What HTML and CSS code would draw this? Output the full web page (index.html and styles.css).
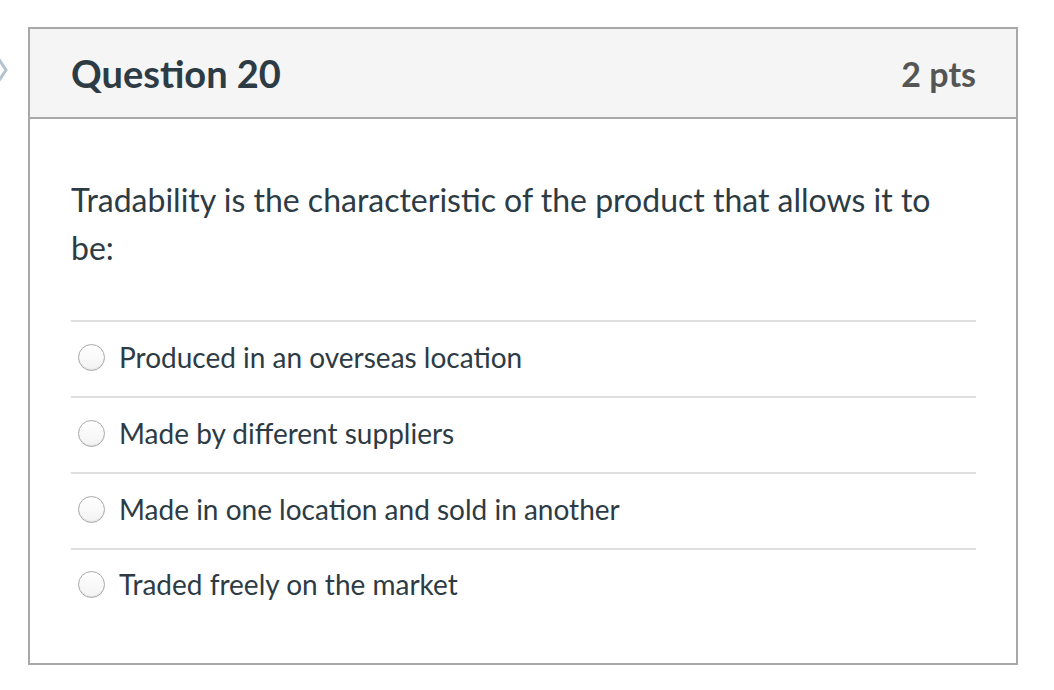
FILE: index.html
```html
<!DOCTYPE html>
<html>
<head>
<meta charset="utf-8">
<link rel="stylesheet" href="styles.css">
</head>
<body>
<div class="page">
  <svg class="nav-arrow" width="12" height="30" viewBox="0 0 12 30"><polyline points="1,3 9,15 1,27" fill="none" stroke="#b4c3cf" stroke-width="3"/></svg>
  <div class="card">
    <div class="card-header">
      <h2 class="title">Question 20</h2>
      <span class="pts">2 pts</span>
    </div>
    <div class="card-body">
      <p class="question">Tradability is the characteristic of the product that allows it to be:</p>
      <div class="answers">
        <label class="answer"><span class="radio"></span><span class="answer-text">Produced in an overseas location</span></label>
        <label class="answer"><span class="radio"></span><span class="answer-text">Made by different suppliers</span></label>
        <label class="answer"><span class="radio"></span><span class="answer-text">Made in one location and sold in another</span></label>
        <label class="answer"><span class="radio"></span><span class="answer-text">Traded freely on the market</span></label>
      </div>
    </div>
  </div>
</div>
</body>
</html>
```
FILE: styles.css
```css
html, body {
  margin: 0;
  padding: 0;
  background: #fff;
}
body {
  font-family: Lato, "Open Sans", sans-serif;
  color: #2d3b45;
}
.page {
  position: relative;
  width: 1054px;
  height: 690px;
  padding: 27px 0 0 28px;
  box-sizing: border-box;
}
.nav-arrow {
  position: absolute;
  left: -3px;
  top: 55px;
}
.card {
  width: 990px;
  border: 2px solid #a8a8a8;
  box-sizing: border-box;
  height: 638px;
}
.card-header {
  display: flex;
  justify-content: space-between;
  align-items: center;
  background: #f5f5f5;
  border-bottom: 2px solid #a8a8a8;
  height: 90px;
  padding: 0 40px 0 41px;
  box-sizing: border-box;
}
.title {
  margin: 0;
  font-size: 38px;
  font-weight: 700;
  color: #2d3b45;
}
.pts {
  font-size: 34px;
  font-weight: 700;
  color: #555;
}
.card-body {
  padding: 57px 40px 0 41px;
}
.question {
  margin: 0 0 48px;
  font-size: 32px;
  line-height: 48px;
  padding-right: 20px;
}
.answers {
  display: flex;
  flex-direction: column;
}
.answer {
  display: flex;
  align-items: center;
  gap: 14px;
  height: 76px;
  border-top: 2px solid #dcdedf;
  box-sizing: border-box;
  padding: 0 0 4px 7px;
  font-size: 28px;
}
.answer:last-child {
  height: 74px;
}
.radio {
  width: 27px;
  height: 27px;
  box-sizing: border-box;
  border-radius: 50%;
  border: 1px solid #a9a9a9;
  background: linear-gradient(#ffffff, #f3f3f3);
  box-shadow: inset 0 -1px 1px rgba(0,0,0,0.08);
  flex: none;
}
```
